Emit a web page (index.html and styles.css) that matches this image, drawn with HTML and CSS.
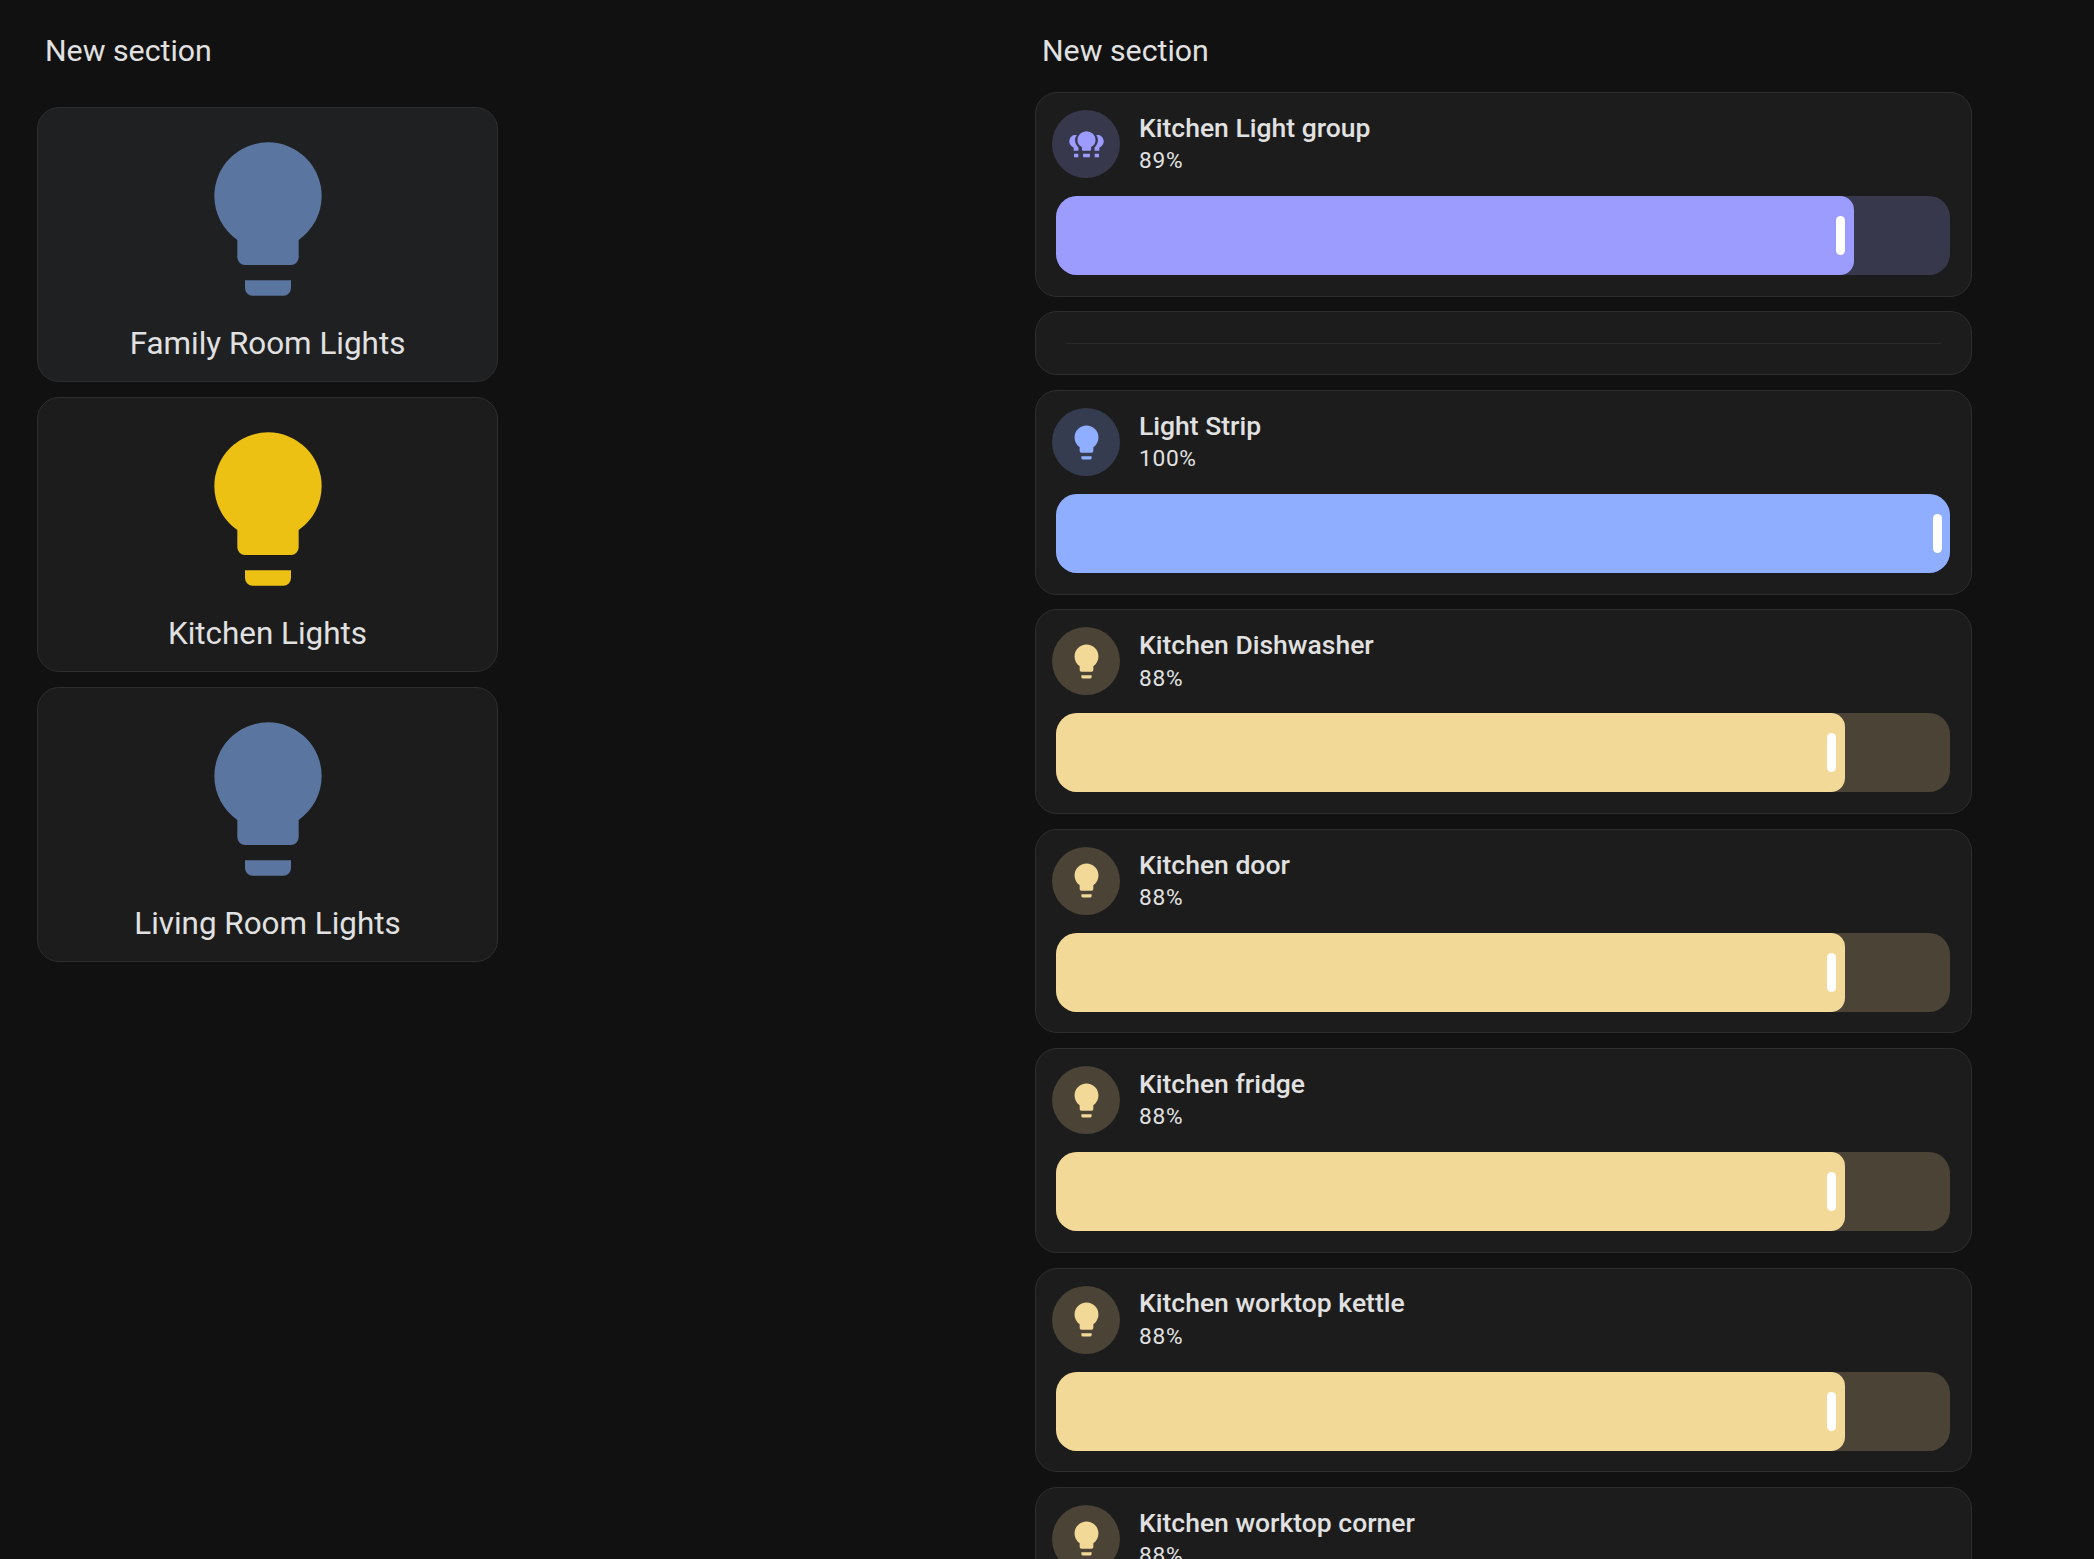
FILE: index.html
```html
<!DOCTYPE html>
<html lang="en">
<head>
<meta charset="utf-8">
<title>Lights</title>
<link rel="stylesheet" href="styles.css">
</head>
<body>
<svg class="sprites" width="0" height="0">
	<symbol id="bulb" viewBox="0 0 24 24"><path d="M12,2A7,7 0 0,0 5,9C5,11.38 6.19,13.47 8,14.74V17A1,1 0 0,0 9,18H15A1,1 0 0,0 16,17V14.74C17.81,13.47 19,11.38 19,9A7,7 0 0,0 12,2M9,21A1,1 0 0,0 10,22H14A1,1 0 0,0 15,21V20H9V21Z"/></symbol>
	<symbol id="bulb-group" viewBox="0 0 24 24"><path d="M12,4.8A5.3,5.3 0 0,0 6.7,10.1C6.7,11.8 7.6,13.3 9.3,14.1V15.5A.7,.7 0 0,0 10,16.2H14A.7,.7 0 0,0 14.7,15.5V14.1C16.4,13.3 17.3,11.8 17.3,10.1A5.3,5.3 0 0,0 12,4.8ZM4.6,7C3,7.6 1.9,9.1 1.9,10.9C1.9,12.4 2.9,13.8 4.5,14.5V16.2H7.3V14.3C6,13.2 5.3,11.7 5.3,10C5.3,8.9 5.7,7.9 6.3,7ZM19.4,7C21,7.6 22.1,9.1 22.1,10.9C22.1,12.4 21.1,13.8 19.5,14.5V16.2H16.7V14.3C18,13.2 18.7,11.7 18.7,10C18.7,8.9 18.3,7.9 17.7,7ZM10,18H14V20H10ZM4.7,18H7.2V20H4.7ZM16.8,18H19.3V20H16.8Z"/></symbol>
</svg>

<div class="page">
	<section class="col-tiles">
		<h2 class="section-title">New section</h2>
		<div class="tile tile-off tile-first">
			<svg class="tile-icon"><use href="#bulb"/></svg>
			<div class="tile-name">Family Room Lights</div>
		</div>
		<div class="tile tile-on">
			<svg class="tile-icon"><use href="#bulb"/></svg>
			<div class="tile-name">Kitchen Lights</div>
		</div>
		<div class="tile tile-off tile-plain">
			<svg class="tile-icon"><use href="#bulb"/></svg>
			<div class="tile-name">Living Room Lights</div>
		</div>
	</section>

	<section class="col-lights">
		<h2 class="section-title">New section</h2>

		<div class="light violet">
			<div class="light-head">
				<span class="badge"><svg><use href="#bulb-group"/></svg></span>
				<div class="light-text"><div class="light-name">Kitchen Light group</div><div class="light-state">89%</div></div>
			</div>
			<div class="slider"><div class="fill" style="width:89.25%"><span class="knob"></span></div></div>
		</div>

		<div class="divider-card"><hr class="divider"></div>

		<div class="light blue">
			<div class="light-head">
				<span class="badge"><svg><use href="#bulb"/></svg></span>
				<div class="light-text"><div class="light-name">Light Strip</div><div class="light-state">100%</div></div>
			</div>
			<div class="slider"><div class="fill" style="width:100%"><span class="knob"></span></div></div>
		</div>

		<div class="light warm">
			<div class="light-head">
				<span class="badge"><svg><use href="#bulb"/></svg></span>
				<div class="light-text"><div class="light-name">Kitchen Dishwasher</div><div class="light-state">88%</div></div>
			</div>
			<div class="slider"><div class="fill" style="width:88.25%"><span class="knob"></span></div></div>
		</div>

		<div class="light warm">
			<div class="light-head">
				<span class="badge"><svg><use href="#bulb"/></svg></span>
				<div class="light-text"><div class="light-name">Kitchen door</div><div class="light-state">88%</div></div>
			</div>
			<div class="slider"><div class="fill" style="width:88.25%"><span class="knob"></span></div></div>
		</div>

		<div class="light warm">
			<div class="light-head">
				<span class="badge"><svg><use href="#bulb"/></svg></span>
				<div class="light-text"><div class="light-name">Kitchen fridge</div><div class="light-state">88%</div></div>
			</div>
			<div class="slider"><div class="fill" style="width:88.25%"><span class="knob"></span></div></div>
		</div>

		<div class="light warm">
			<div class="light-head">
				<span class="badge"><svg><use href="#bulb"/></svg></span>
				<div class="light-text"><div class="light-name">Kitchen worktop kettle</div><div class="light-state">88%</div></div>
			</div>
			<div class="slider"><div class="fill" style="width:88.25%"><span class="knob"></span></div></div>
		</div>

		<div class="light warm">
			<div class="light-head">
				<span class="badge"><svg><use href="#bulb"/></svg></span>
				<div class="light-text"><div class="light-name">Kitchen worktop corner</div><div class="light-state">88%</div></div>
			</div>
			<div class="slider"><div class="fill" style="width:88.25%"><span class="knob"></span></div></div>
		</div>
	</section>
</div>
</body>
</html>
```

FILE: styles.css
```css
*{ margin:0; padding:0; box-sizing:border-box;}
html,body{ height:100%; overflow:hidden;}
body{ background:#111111; font-family:Roboto,"Liberation Sans",sans-serif; color:#e1e1e1;}
.sprites{ display:block; height:0;}

.page{ display:grid; grid-template-columns:461px 937px; column-gap:537px; padding-left:37px; align-items:start;}

.section-title{ font-size:30.3px; font-weight:400; line-height:40px; padding:31px 8px 0;}
.col-lights{ display:flex; flex-direction:column; gap:14.7px;}
.col-lights .section-title{ margin-bottom:6.3px; margin-left:-1px;}

.tile{ height:274.5px; margin-top:15.5px; background:#1c1c1c; border:1px solid #2e2e2e; border-radius:22px; display:flex; flex-direction:column; align-items:center; padding-top:18.4px;}
.tile-first{ margin-top:36.3px;}
.tile-icon{ width:184px; height:184px; flex:none;}
.tile-name{ font-size:31.4px; line-height:40px; margin-top:13.8px;}
.tile-off{ background:#1f2022;}
.tile-plain{ background:#1c1c1c;}
.tile-off .tile-icon{ fill:#5a759f;}
.tile-on .tile-icon{ fill:#ecc113;}

.light{ height:204.7px; background:#1c1c1c; border:1px solid #2e2e2e; border-radius:22px; padding:17px 20px 0;}
.light-head{ display:flex; align-items:center; height:68px; margin-left:-4px;}
.badge{ width:68px; height:68px; border-radius:50%; display:flex; align-items:center; justify-content:center; flex:none; padding-left:1px;}
.badge svg{ width:41px; height:41px;}
.light-text{ margin-left:19px;}
.light-name{ font-size:26.5px; font-weight:500; line-height:33.5px;}
.light-state{ font-size:22.7px; letter-spacing:.7px; line-height:33px;}

.slider{ height:79px; margin-top:18px; margin-right:1px; border-radius:21px; overflow:hidden;}
.fill{ height:100%; border-radius:0 14px 14px 0; position:relative;}
.knob{ position:absolute; right:8.5px; top:20px; width:9px; height:39px; border-radius:4.5px; background:#fff;}

.violet .badge,.violet .slider{ background:#38384d;}
.violet svg{ fill:#9c9cff;}
.violet .fill{ background:#9c9cff;}
.blue .badge,.blue .slider{ background:#353c4f;}
.blue svg{ fill:#90aeff;}
.blue .fill{ background:#90aeff;}
.warm .badge,.warm .slider{ background:#4a4336;}
.warm svg{ fill:#f3d998;}
.warm .fill{ background:#f3d998;}

.divider-card{ height:64px; background:#1c1c1c; border:1px solid #2e2e2e; border-radius:22px; display:flex; align-items:center; padding:0 30px;}
.divider{ width:100%; border:0; border-top:1px solid #2a2a2a;}
```
